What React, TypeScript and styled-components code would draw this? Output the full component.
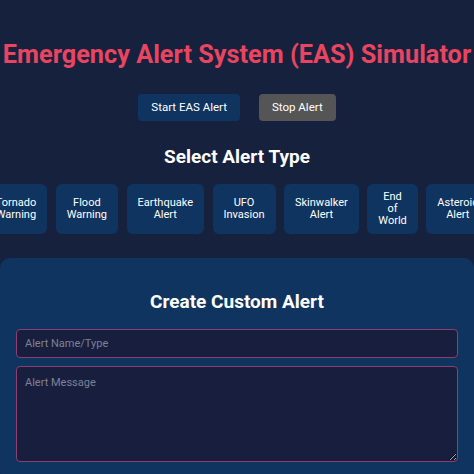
import React from 'react'
import styled, { createGlobalStyle } from 'styled-components'

const GlobalStyle = createGlobalStyle`
  html, body {
    margin: 0;
    padding: 0;
    background: #16213e;
    overflow: hidden;
  }
  body {
    font-family: Roboto, 'Liberation Sans', Arial, sans-serif;
    color: #ffffff;
  }
`

const Page = styled.div`
  width: 474px;
  min-height: 474px;
  display: flex;
  flex-direction: column;
  align-items: center;
  overflow: hidden;
`

const Title = styled.h1`
  margin: 40px 0 0;
  font-size: 25.3px;
  line-height: 30px;
  font-weight: 700;
  color: #e94560;
  white-space: nowrap;
  text-align: center;
`

const Controls = styled.div`
  display: flex;
  gap: 19px;
  margin-top: 24px;
`

const ControlButton = styled.button<{ $variant?: 'start' | 'stop' }>`
  font-family: inherit;
  font-size: 11.5px;
  line-height: 13px;
  color: #fff;
  border: none;
  border-radius: 4px;
  padding: 7px 13px;
  background: ${({ $variant }) => ($variant === 'stop' ? '#555555' : '#0f3460')};
`

const SectionTitle = styled.h2`
  margin: 24px 0 0;
  font-size: 19px;
  line-height: 23px;
  font-weight: 700;
  color: #fff;
  text-align: center;
`

const TypeRow = styled.div`
  display: flex;
  justify-content: center;
  gap: 8.5px;
  width: 474px;
  margin-top: 16px;
`

const TypeButton = styled.button`
  flex-shrink: 0;
  width: min-content;
  font-family: inherit;
  font-size: 11px;
  line-height: 12px;
  color: #fff;
  background: #0f3460;
  border: none;
  border-radius: 6px;
  padding: 7px 11px;
  text-align: center;
`

const Panel = styled.div`
  box-sizing: border-box;
  width: 474px;
  margin-top: 24px;
  padding: 32px 16px 20px;
  background: #0f3460;
  border-radius: 10px;
  display: flex;
  flex-direction: column;
  gap: 8px;
`

const PanelTitle = styled.h2`
  margin: 0 0 8px;
  font-size: 19px;
  line-height: 23px;
  font-weight: 700;
  text-align: center;
`

const Field = styled.input`
  box-sizing: border-box;
  width: 100%;
  height: 29px;
  padding: 0 8px;
  font-family: inherit;
  font-size: 11px;
  color: #fff;
  background: #181f3e;
  border: 1px solid #8e3d70;
  border-radius: 4px;
  &::placeholder {
    color: #7d8196;
  }
`

const MessageField = styled.textarea`
  box-sizing: border-box;
  width: 100%;
  height: 96px;
  padding: 9px 8px;
  font-family: inherit;
  font-size: 11px;
  color: #fff;
  background: #181f3e;
  border: 1px solid #8e3d70;
  border-radius: 4px;
  &::placeholder {
    color: #7d8196;
  }
`

const alertTypes = [
  'Tornado Warning',
  'Flood Warning',
  'Earthquake Alert',
  'UFO Invasion',
  'Skinwalker Alert',
  'End of World',
  'Asteroid Alert',
]

export default function App() {
  return (
    <Page>
      <GlobalStyle />
      <Title>Emergency Alert System (EAS) Simulator</Title>
      <Controls>
        <ControlButton $variant="start">Start EAS Alert</ControlButton>
        <ControlButton $variant="stop">Stop Alert</ControlButton>
      </Controls>
      <SectionTitle>Select Alert Type</SectionTitle>
      <TypeRow>
        {alertTypes.map(type => (
          <TypeButton key={type}>{type}</TypeButton>
        ))}
      </TypeRow>
      <Panel>
        <PanelTitle>Create Custom Alert</PanelTitle>
        <Field placeholder="Alert Name/Type" />
        <MessageField placeholder="Alert Message" />
      </Panel>
    </Page>
  )
}
